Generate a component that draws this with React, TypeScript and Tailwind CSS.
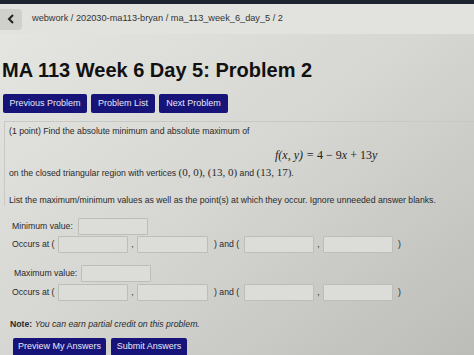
import React from "react";

const sans = { fontFamily: '"Liberation Sans", Arial, sans-serif' };
const serif = { fontFamily: '"Liberation Serif", "Times New Roman", serif' };

function Btn({ label, className = "" }: { label: string; className?: string }) {
  return (
    <button
      type="button"
      className={`rounded-[2px] bg-[#161479] text-[9px] text-[#e8e8f4] ${className}`}
    >
      {label}
    </button>
  );
}

function Blank({ w = "w-[70px]" }: { w?: string }) {
  return <span className={`inline-block h-[17px] ${w} rounded-[1px] border border-[#bdbdba] bg-[#dcdcd9]`} />;
}

function OccursRow() {
  return (
    <div className="flex h-[17px] items-center text-[8.7px] text-[#2a2a2a]">
      <span className="w-[46px] pl-[12px] whitespace-nowrap">Occurs at (</span>
      <span className="ml-[12px] flex"><Blank /></span>
      <span className="w-[9px] text-center">,</span>
      <Blank w="w-[71px]" />
      <span className="ml-[6px] w-[30px] whitespace-nowrap">) and (</span>
      <Blank />
      <span className="w-[9px] text-center">,</span>
      <Blank />
      <span className="ml-[5px]">)</span>
    </div>
  );
}

export default function App() {
  return (
    <div
      className="relative h-[355px] w-[474px] overflow-hidden bg-linear-to-br from-[#e6e6e2] via-[#d6d6d2] to-[#bcbcb8]"
      style={sans}
    >
      <div className="h-[4px] bg-[#1d2430]" />
      <div className="flex h-[30px] items-center bg-[#e2e2de]">
        <div className="flex h-[21px] w-[22px] items-center justify-center rounded-r-[4px] bg-[#cfcfcc]">
          <svg width="8" height="10" viewBox="0 0 8 10">
            <path d="M6 1 L2 5 L6 9" fill="none" stroke="#222" strokeWidth="2" />
          </svg>
        </div>
        <span className="ml-[10px] text-[9.2px] text-[#333]">
          webwork / 202030-ma113-bryan / ma_113_week_6_day_5 / 2
        </span>
      </div>

      <h1 className="mt-[23px] pl-[2px] text-[20px] font-bold leading-[26px] text-[#111]">
        MA 113 Week 6 Day 5: Problem 2
      </h1>

      <div className="mt-[11px] flex gap-[4px] pl-[3px]">
        <Btn label="Previous Problem" className="h-[19px] w-[84px]" />
        <Btn label="Problem List" className="h-[19px] w-[64px]" />
        <Btn label="Next Problem" className="h-[19px] w-[69px]" />
      </div>

      <div className="ml-[4px] mt-[8px] border-l border-t border-[#c8c8c4] pt-[3px] text-[8.7px] leading-[12px] text-[#2a2a2a]">
        <p className="pl-[4px]">(1 point) Find the absolute minimum and absolute maximum of</p>
        <p className="mt-[11px] pl-[270px] text-[12px] leading-[14px] italic text-[#222]" style={serif}>
          f(x, y) = <span className="not-italic">4 − 9</span>x <span className="not-italic">+ 13</span>y
        </p>
        <p className="mt-[3px] pl-[4px] leading-[14px]">
          on the closed triangular region with vertices{" "}
          <span className="text-[11px]" style={serif}>(0, 0), (13, 0)</span> and{" "}
          <span className="text-[11px]" style={serif}>(13, 17)</span>.
        </p>
        <p className="mt-[14px] pl-[4px]">
          List the maximum/minimum values as well as the point(s) at which they occur. Ignore unneeded answer blanks.
        </p>
      </div>

      <div className="mt-[12px] flex flex-col">
        <div className="flex h-[17px] items-center text-[8.7px] text-[#2a2a2a]">
          <span className="w-[78px] pl-[12px]">Minimum value:</span>
          <Blank />
        </div>
        <div className="mt-[1px]"><OccursRow /></div>
        <div className="mt-[12px] flex h-[17px] items-center text-[8.7px] text-[#2a2a2a]">
          <span className="w-[81px] pl-[14px]">Maximum value:</span>
          <Blank />
        </div>
        <div className="mt-[2px]"><OccursRow /></div>
      </div>

      <p className="mt-[17px] pl-[10px] text-[8.7px] leading-[12px] text-[#2a2a2a]">
        <span className="font-bold">Note:</span> <i>You can earn partial credit on this problem.</i>
      </p>

      <div className="mt-[8px] flex gap-[5px] pl-[13px]">
        <Btn label="Preview My Answers" className="h-[18px] w-[93px]" />
        <Btn label="Submit Answers" className="h-[18px] w-[76px]" />
      </div>
    </div>
  );
}
